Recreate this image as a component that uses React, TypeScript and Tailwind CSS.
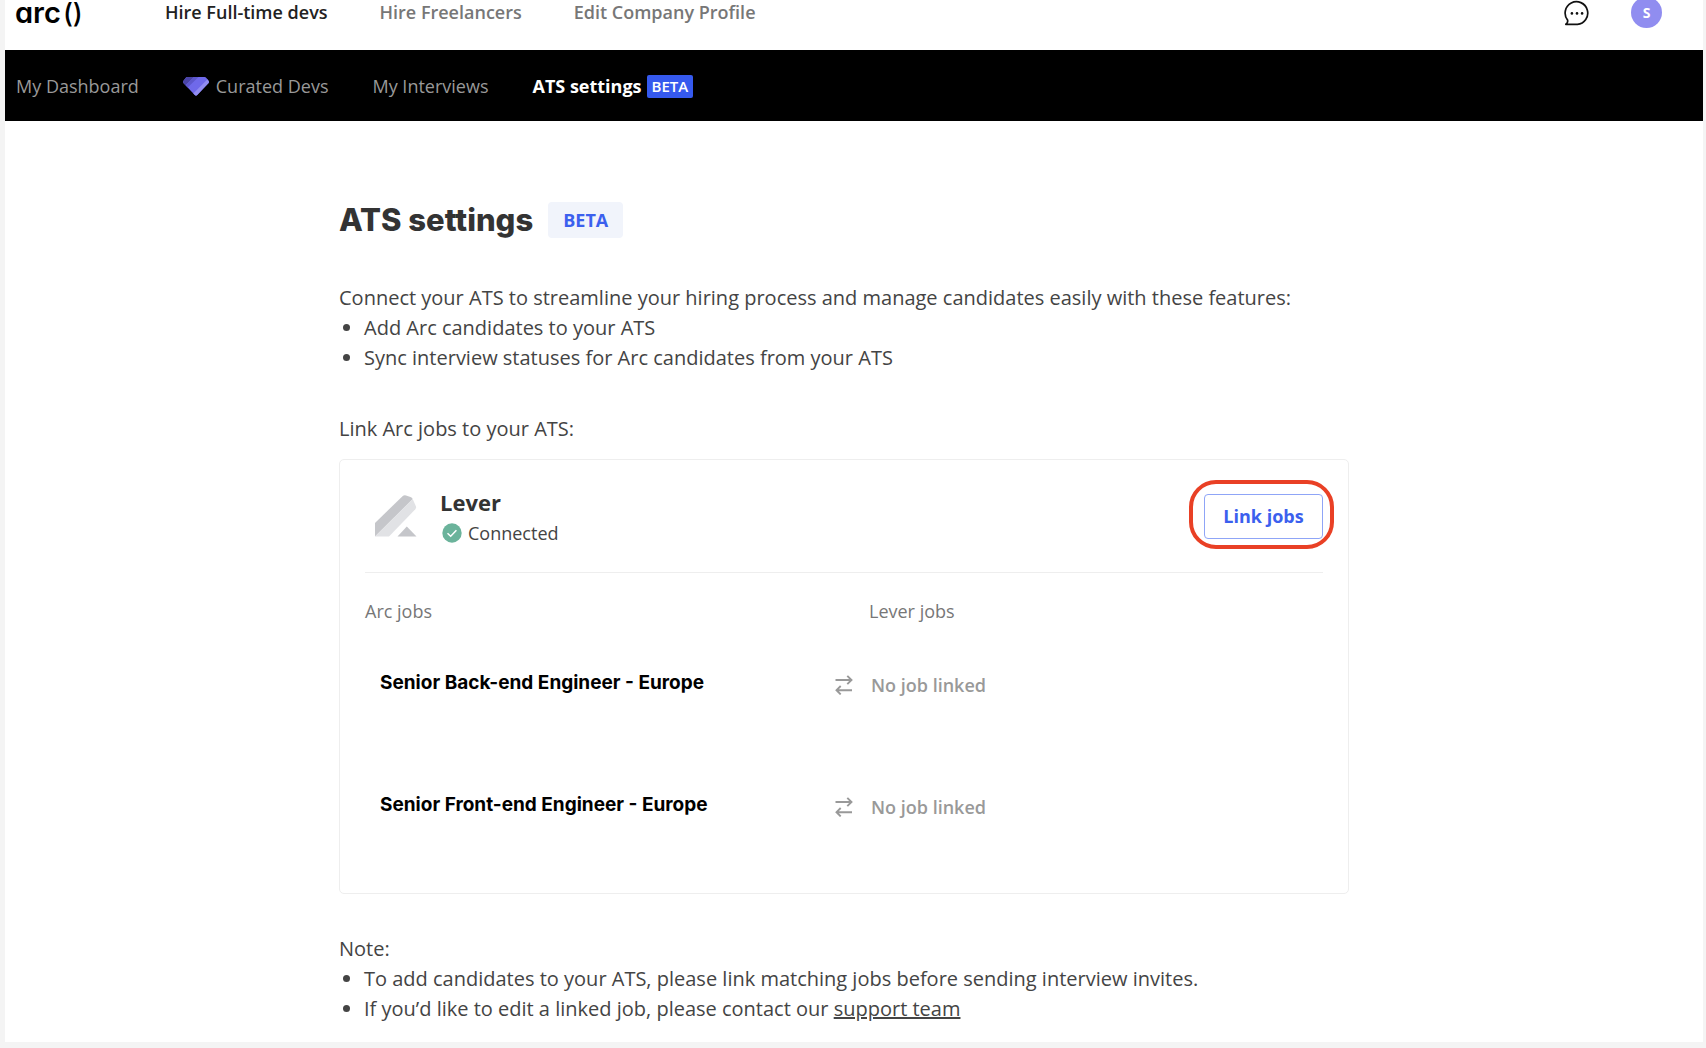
import React from "react";

const topLinks = [
  { label: "Hire Full-time devs", active: true },
  { label: "Hire Freelancers", active: false },
  { label: "Edit Company Profile", active: false },
];

const jobs = ["Senior Back-end Engineer - Europe", "Senior Front-end Engineer - Europe"];

const ChatIcon = () => (
  <svg width="26" height="26" viewBox="0 0 26 26" fill="none" aria-hidden="true">
    <path d="M1.8 24.3c1.6-.9 2.2-2.1 1.8-4.2A11.3 11.3 0 1 1 13.4 24.3Z" stroke="#111" strokeWidth="1.7" strokeLinejoin="round" />
    <circle cx="7.9" cy="13.4" r="1.3" fill="#111" />
    <circle cx="13" cy="13.4" r="1.3" fill="#111" />
    <circle cx="18.1" cy="13.4" r="1.3" fill="#111" />
  </svg>
);

const DiamondIcon = () => (
  <svg width="26" height="19" viewBox="0 0 26 19" aria-hidden="true">
    <path d="M4.5 0h17c.8 0 1.4.3 1.9.9l2.1 2.9c.6.8.6 1.7-.1 2.4L14.2 18c-.7.8-1.7.8-2.4 0L.6 6.2C-.1 5.5-.1 4.6.5 3.8L2.6.9C3.1.3 3.7 0 4.5 0Z" fill="#6f69ea" />
    <path d="M4.5 0H11L2.5 8.2.6 6.2C-.1 5.5-.1 4.6.5 3.8L2.6.9C3.1.3 3.7 0 4.5 0Z" fill="#4a44a6" />
    <path d="M11 0h4.5L4.7 10.5 2.5 8.2Z" fill="#5d57cc" />
    <path d="m24.5 2.3 1 1.5c.6.8.6 1.7-.1 2.4L14.2 18c-.7.8-1.7.8-2.4 0l-1.5-1.6Z" fill="#918cf2" />
  </svg>
);

const LeverLogo = () => (
  <svg width="42" height="42" viewBox="0 0 42 42" aria-hidden="true">
    <path d="M0 28 27.5 1.2Q29 0 31 .5L35.5 2q1.5.6 2.2 2L0 41.5Z" fill="#c5c6ca" />
    <path d="M37.7 4 41 11.5q.4 1.5-.7 2.7L14 41.5H0Z" fill="#e1e2e5" />
    <path d="M31.8 31.5 41.5 41.5H22.5Z" fill="#c5c6ca" />
  </svg>
);

const CheckIcon = () => (
  <svg width="20" height="20" viewBox="0 0 20 20" aria-hidden="true">
    <circle cx="10" cy="10" r="9.7" fill="#6bb39b" />
    <path d="m5.5 10.3 3.2 3 5.7-6" fill="none" stroke="#fff" strokeWidth="1.5" />
  </svg>
);

const SwapIcon = () => (
  <svg width="18" height="20" viewBox="0 0 18 20" fill="none" stroke="#999" strokeWidth="1.9" aria-hidden="true">
    <path d="M.5 5H16.5M12.3.8 16.5 5l-4.2 4.2M17 15.2H1.5M5.7 11 1.5 15.2l4.2 4.2" />
  </svg>
);

function Header() {
  return (
    <header className="-mt-[25px] h-[75px] flex items-center justify-between pl-[10px] pr-[41px]">
      <div className="flex items-center">
        <a href="#" className="w-[150px] pt-[2px] font-['Inter',sans-serif] text-[29px] leading-6 font-semibold text-black [font-feature-settings:'cv11']">
          arc<span className="ml-[2px] font-medium text-[27px]">()</span>
        </a>
        <nav className="flex gap-[52px] text-[18px] font-semibold">
          {topLinks.map((link) => (
            <a key={link.label} href="#" className={link.active ? "text-[#222]" : "text-[#777]"}>
              {link.label}
            </a>
          ))}
        </nav>
      </div>
      <div className="flex items-center gap-[41px]">
        <button type="button" aria-label="Messages"><ChatIcon /></button>
        <button type="button" className="size-[31px] rounded-full bg-[#908df0] text-white text-[14px] font-bold">S</button>
      </div>
    </header>
  );
}

function SubNav() {
  return (
    <nav className="h-[71px] pt-px bg-black flex items-center gap-[44px] pl-[11px] text-[18px] text-[#999]">
      <a href="#">My Dashboard</a>
      <a href="#" className="flex items-center gap-[7px]">
        <DiamondIcon />
        Curated Devs
      </a>
      <a href="#">My Interviews</a>
      <a href="#" className="flex items-center gap-[5px] font-bold text-white">
        ATS settings
        <span className="h-[23px] px-[5px] rounded-[2px] bg-[#3559ee] text-[15px] leading-[23px] font-semibold">BETA</span>
      </a>
    </nav>
  );
}

function LeverCard() {
  return (
    <section className="mt-[15px] border border-[#eee] rounded-[5px] px-[25px]">
      <div className="h-[113px] flex items-center justify-between border-b border-[#eee]">
        <div className="flex items-center pl-[10px] gap-[23px]">
          <LeverLogo />
          <div className="pt-[3px]">
            <h2 className="text-[22px] leading-[31px] font-bold text-[#333]">Lever</h2>
            <p className="flex items-center gap-[6px] pl-[2px] text-[18px] leading-[31px]">
              <CheckIcon />
              Connected
            </p>
          </div>
        </div>
        <div className="relative">
          <button type="button" className="w-[119px] h-[45px] border border-[#8fa5f7] rounded-[4px] text-[18px] font-bold text-[#3b60ee]">
            Link jobs
          </button>
          {/* highlight ring */}
          <div className="absolute -left-[15px] -right-[11px] -top-[14px] -bottom-[10px] border-4 border-[#e94025] rounded-[27px] pointer-events-none"></div>
        </div>
      </div>
      <table className="w-full table-fixed text-left">
        <thead>
          <tr className="h-[76px] text-[18px] text-[#777]">
            <th className="w-[470px] font-normal">Arc jobs</th>
            <th className="w-[34px]"></th>
            <th className="font-normal">Lever jobs</th>
          </tr>
        </thead>
        <tbody>
          {jobs.map((job) => (
            <tr key={job} className="h-[122px] align-top">
              <td className="pt-[18px] pl-[15px] font-['Inter',sans-serif] text-[19px] leading-[31px] font-bold text-black">{job}</td>
              <td className="pt-[26px]"><SwapIcon /></td>
              <td className="pt-[21px] pl-[2px] text-[18px] leading-[31px] font-semibold text-[#999]">No job linked</td>
            </tr>
          ))}
        </tbody>
      </table>
    </section>
  );
}

export default function App() {
  return (
    <div className="min-h-screen bg-[#f4f4f4] pl-[5px] pr-[3px] pb-[6px] flex flex-col overflow-hidden font-['Open_Sans',sans-serif]">
      <div className="grow bg-white">
        <Header />
        <SubNav />
        <main className="pt-[81px] pr-5 pb-[17px]">
          <div className="max-w-[1010px] mx-auto text-[20px] leading-[30px] text-[#444]">
            <div className="flex items-center gap-[15px]">
              <h1 className="font-['Inter',sans-serif] text-[31px] leading-9 font-extrabold text-[#333]">ATS settings</h1>
              <span className="h-9 px-[15px] rounded-[4px] bg-[#f1f4fb] text-[18px] leading-9 font-bold text-[#3b60ee]">BETA</span>
            </div>
            <p className="mt-[45px]">Connect your ATS to streamline your hiring process and manage candidates easily with these features:</p>
            <ul className="list-disc pl-[25px]">
              <li>Add Arc candidates to your ATS</li>
              <li>Sync interview statuses for Arc candidates from your ATS</li>
            </ul>
            <p className="mt-[41px]">Link Arc jobs to your ATS:</p>
            <LeverCard />
            <p className="mt-[40px]">Note:</p>
            <ul className="list-disc pl-[25px]">
              <li>To add candidates to your ATS, please link matching jobs before sending interview invites.</li>
              <li>
                If you’d like to edit a linked job, please contact our <a href="#" className="underline">support team</a>
              </li>
            </ul>
          </div>
        </main>
      </div>
    </div>
  );
}
